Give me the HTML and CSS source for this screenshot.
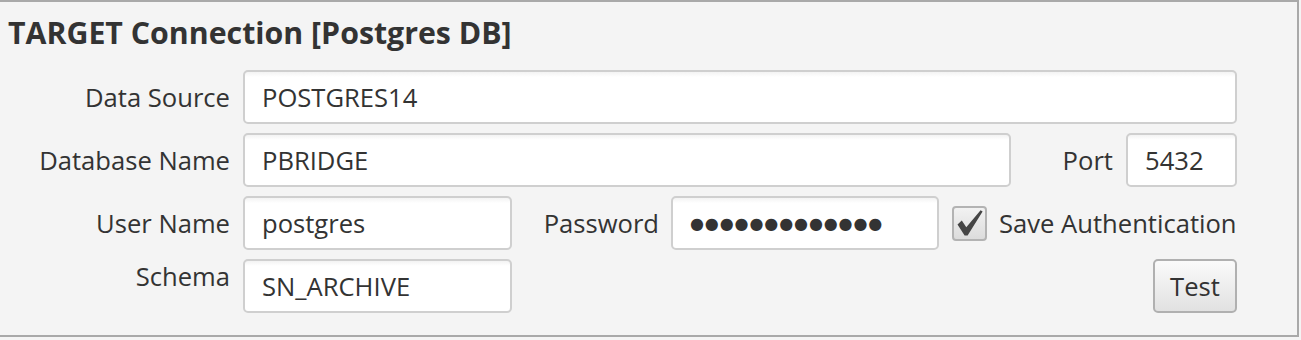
FILE: index.html
```html
<!DOCTYPE html>
<html lang="en">
<head>
<meta charset="utf-8">
<title>TARGET Connection</title>
<link rel="stylesheet" href="styles.css">
</head>
<body>
<section class="panel">
  <h1 class="title">TARGET Connection [Postgres DB]</h1>
  <div class="rows">
    <div class="row">
      <span class="label label-main">Data Source</span>
      <div class="field w-full">POSTGRES14</div>
    </div>
    <div class="row">
      <span class="label label-main">Database Name</span>
      <div class="field w-db">PBRIDGE</div>
      <span class="label label-port">Port</span>
      <div class="field w-port">5432</div>
    </div>
    <div class="row">
      <span class="label label-main">User Name</span>
      <div class="field w-short">postgres</div>
      <span class="label label-pass">Password</span>
      <div class="field w-pass"><span class="dots">●●●●●●●●●●●●●</span></div>
      <span class="checkbox" role="checkbox" aria-checked="true">
        <svg viewBox="0 0 35 35" width="35" height="35" aria-hidden="true">
          <path d="M5.5 18.5 L9.8 14.6 L14.3 21.2 L28.6 4.2 L30.6 5.6 L15.6 29.6 L12.6 29.6 Z" fill="#454545"/>
        </svg>
      </span>
      <span class="check-text">Save Authentication</span>
    </div>
    <div class="row">
      <span class="label label-main label-top">Schema</span>
      <div class="field w-short">SN_ARCHIVE</div>
      <span class="spacer"></span>
      <button class="button" type="button">Test</button>
    </div>
  </div>
</section>
</body>
</html>
```
FILE: styles.css
```css
html, body {
  margin: 0;
  padding: 0;
  background: #f4f4f4;
}

body {
  font-family: "Open Sans", "Noto Sans", sans-serif;
  font-size: 25.6px;
  color: #333333;
}

.panel {
  box-sizing: border-box;
  width: 1299px;
  height: 337px;
  border-top: 2px solid #a9a9a9;
  border-right: 2px solid #a9a9a9;
  border-bottom: 2px solid #a9a9a9;
  padding: 13px 60px 0 8px;
  background: #f4f4f4;
}

.title {
  margin: 0;
  font-size: 30.3px;
  line-height: 36px;
  font-weight: 700;
  color: #333333;
}

.rows {
  margin-top: 19px;
  display: flex;
  flex-direction: column;
  gap: 9px;
}

.row {
  display: flex;
  align-items: center;
  height: 54px;
}

.label {
  text-align: right;
  white-space: nowrap;
  line-height: 35px;
}

.label-main {
  width: 222px;
  margin-right: 13px;
  flex: none;
}

.label-top {
  align-self: flex-start;
  margin-top: 0px;
}

.label-port {
  width: 102px;
  margin-right: 13px;
  flex: none;
}

.label-pass {
  width: 147px;
  margin-right: 12px;
  flex: none;
}

.field {
  box-sizing: border-box;
  height: 54px;
  flex: none;
  display: flex;
  align-items: center;
  padding-left: 17px;
  background: linear-gradient(#f3f3f3 0px, #ffffff 5px, #ffffff 100%);
  border: 2px solid #cfcfcf;
  border-radius: 5px;
  white-space: nowrap;
  overflow: hidden;
}

.w-full { width: 994px; }
.w-db { width: 768px; }
.w-port { width: 111px; }
.w-short { width: 269px; }
.w-pass { width: 268px; }

.dots {
  font-family: "DejaVu Sans", sans-serif;
  font-size: 16px;
  letter-spacing: 0.9px;
  color: #333333;
}

.checkbox {
  box-sizing: border-box;
  width: 35px;
  height: 35px;
  margin-left: 13px;
  flex: none;
  border: 2px solid #b3b3b3;
  border-radius: 4px;
  background: linear-gradient(#f2f2f2, #dcdcdc);
  display: flex;
  align-items: center;
  justify-content: center;
}

.checkbox svg {
  display: block;
  margin: -2px;
}

.check-text {
  margin-left: 12px;
  white-space: nowrap;
}

.spacer {
  flex: 1;
}

.button {
  box-sizing: border-box;
  width: 84px;
  height: 54px;
  flex: none;
  margin: 0;
  padding: 0;
  font: inherit;
  color: #333333;
  border: 2px solid #b0b0b0;
  border-radius: 5px;
  background: linear-gradient(#fafafa, #e1e1e1);
}
```
